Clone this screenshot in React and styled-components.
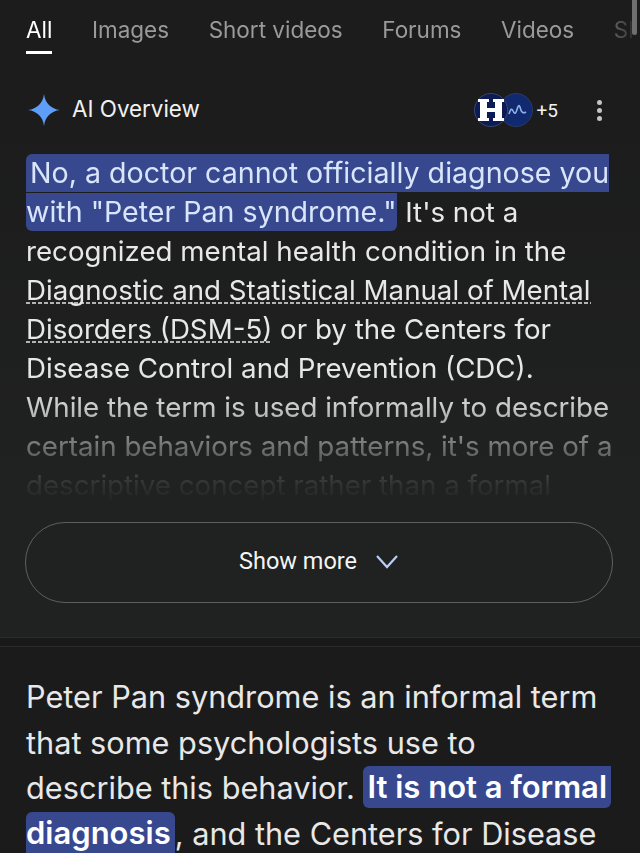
import React from 'react'
import styled, { createGlobalStyle } from "styled-components";

const Global = createGlobalStyle`
  html, body { margin: 0; padding: 0; background: #1b1b1b; }
  body { width: 640px; height: 853px; overflow: hidden; font-family: "Inter", "Liberation Sans", sans-serif; }
`;

const Page = styled.div`
  position: relative;
  width: 640px;
  height: 853px;
  overflow: hidden;
  background: #1b1b1b;
`;

const Overview = styled.section`
  padding-bottom: 34px;
  background: linear-gradient(to bottom, #1c1c1c 0, #1c1c1c 120px, #202121 480px);
`;

const ScrollThumb = styled.div`
  position: absolute;
  top: 0;
  right: 3px;
  width: 5px;
  height: 35px;
  background: #6f6f6f;
  border-radius: 0 0 3px 3px;
`;

const Tabs = styled.nav`
  display: flex;
  gap: 39.5px;
  height: 54px;
  padding-left: 26px;
  overflow: hidden;
  white-space: nowrap;
  font-size: 22.5px;
  mask-image: linear-gradient(to right, #000 585px, rgba(0,0,0,.35) 625px, transparent 636px);
`;

const Tab = styled.div`
  height: 54px;
  box-sizing: border-box;
  padding-top: 15px;
  line-height: 30px;
  color: ${p => (p.$active ? "#fff" : "#9a9a9a")};
  border-bottom: 3px solid ${p => (p.$active ? "#fff" : "transparent")};
`;

const OverviewHead = styled.div`
  display: flex;
  align-items: center;
  height: 100px;
  box-sizing: border-box;
  padding: 12px 26px 0 28px;
`;

const OverviewTitle = styled.span`
  margin-left: 12px;
  padding-bottom: 4px;
  font-size: 22.4px;
  color: #f1f1f1;
  flex: 1;
`;

const Avatars = styled.div`
  display: flex;
  align-items: center;
`;

const Avatar = styled.svg`
  position: relative;
  z-index: ${p => (p.$overlap ? 0 : 1)};
  width: 34px;
  height: 34px;
  margin-left: ${p => (p.$overlap ? "-9px" : "0")};
`;

const MoreCount = styled.span`
  margin-left: 4px;
  font-family: "Roboto", sans-serif;
  font-size: 19px;
  color: #f1f1f1;
`;

const Dots = styled.div`
  display: flex;
  flex-direction: column;
  gap: 3px;
  margin-left: 39px;
  margin-right: 12px;
`;

const Dot = styled.i`
  display: block;
  width: 5px;
  height: 5px;
  border-radius: 50%;
  background: #c4c4c4;
`;

const Answer = styled.div`
  height: 368px;
  padding-left: 26px;
  font-size: 27.7px;
  line-height: 39px;
  color: #e8e8e8;
  white-space: nowrap;
  mask-image: linear-gradient(to bottom, #000 0, #000 215px, rgba(0,0,0,.85) 253px, rgba(0,0,0,.42) 292px, rgba(0,0,0,.08) 331px, transparent 352px);
`;

const Line = styled.div`
  display: block;
`;

const Mark = styled.span`
  display: inline-block;
  line-height: 37px;
  height: 38px;
  vertical-align: top;
  font-size: 28.6px;
  padding: 0 ${p => p.$pad || 0}px 0 ${p => p.$padLeft || 0}px;
  background: #38488f;
  color: #d8e5fb;
  border-radius: ${p => p.$radius || "0"};
`;

const Dashed = styled.span`
  background: repeating-linear-gradient(to right, #b4b4b4 0 4px, transparent 4px 6px) no-repeat 0 calc(100% - 3px) / 100% 2px;
`;

const ShowMore = styled.button`
  display: flex;
  align-items: center;
  justify-content: center;
  gap: 18px;
  box-sizing: border-box;
  width: 588px;
  height: 81px;
  margin-left: 25px;
  padding-bottom: 4px;
  background: transparent;
  border: 1px solid #5d5f60;
  border-radius: 40px;
  font-family: "Roboto", sans-serif;
  font-size: 23.500px;
  color: #f4f4f4;
`;

const Divider = styled.div`
  height: 8px;
  background: #191919;
  border-top: 1px solid #2b2b2b;
  border-bottom: 1px solid #2b2b2b;
`;

const Detail = styled.div`
  padding: 27px 0 0 26px;
  font-size: 30.700px;
  line-height: 45.5px;
  color: #e8e8e8;
  white-space: nowrap;
`;

const Strong = styled.span`
  display: inline-block;
  height: 42px;
  line-height: 42px;
  vertical-align: top;
  margin-top: 1px;
  padding: 0 ${p => p.$pad || 0}px 0 ${p => p.$padLeft || 0}px;
  background: #38488f;
  color: #fff;
  font-size: 31px;
  font-weight: 600;
  border-radius: ${p => p.$radius || "0"};
`;

export default function App() {
  return (
    <Page>
      <Global />
      <ScrollThumb />
      <Overview>
        <Tabs>
          <Tab $active>All</Tab>
          <Tab>Images</Tab>
          <Tab>Short videos</Tab>
          <Tab>Forums</Tab>
          <Tab>Videos</Tab>
          <Tab>Shopping</Tab>
        </Tabs>
        <OverviewHead>
          <svg width="32" height="32" viewBox="0 0 32 32">
            <path d="M16 0C17 9 23 15 32 16C23 17 17 23 16 32C15 23 9 17 0 16C9 15 15 9 16 0Z" fill="#5f9ef8" />
          </svg>
          <OverviewTitle>AI Overview</OverviewTitle>
          <Avatars>
            <Avatar viewBox="0 0 34 34">
              <circle cx="17" cy="17" r="16.5" fill="#0c1a55" stroke="#3a4668" />
              <path d="M4 6H15V9H13V15H21V9H19V6H30V9H28V25H30V28H19V25H21V19H13V25H15V28H4V25H6V9H4Z" fill="#fff" />
            </Avatar>
            <Avatar $overlap viewBox="0 0 34 34">
              <circle cx="17" cy="17" r="16.5" fill="#11296f" stroke="#2b3a66" />
              <path d="M10 21C11 18 12 15 13.500 17C15 20 16 22 17.500 18C19 13 20 11 21 14C22 19 24 21 27 19" fill="none" stroke="#8fb0e8" strokeWidth="1.6" />
            </Avatar>
            <MoreCount>+5</MoreCount>
          </Avatars>
          <Dots><Dot /><Dot /><Dot /></Dots>
        </OverviewHead>
        <Answer>
          <Line><Mark $padLeft={4} $radius="6px 0 0 0">No, a doctor cannot officially diagnose you</Mark></Line>
          <Line><Mark $pad={1} $radius="0 0 6px 6px">with "Peter Pan syndrome."</Mark> It's not a</Line>
          <Line>recognized mental health condition in the</Line>
          <Line><Dashed>Diagnostic and Statistical Manual of Mental</Dashed></Line>
          <Line><Dashed>Disorders (DSM-5)</Dashed> or by the Centers for</Line>
          <Line>Disease Control and Prevention (CDC).</Line>
          <Line>While the term is used informally to describe</Line>
          <Line>certain behaviors and patterns, it's more of a</Line>
          <Line>descriptive concept rather than a formal</Line>
        </Answer>
        <ShowMore>
          Show more
          <svg width="24" height="24" viewBox="0 0 24 24" fill="none" stroke="#b9cdf5" strokeWidth="2.2">
            <path d="M2 7L12 18L22 7" />
          </svg>
        </ShowMore>
      </Overview>
      <Divider />
      <Detail>
        <Line>Peter Pan syndrome is an informal term</Line>
        <Line>that some psychologists use to</Line>
        <Line>describe this behavior. <Strong $padLeft={4} $pad={4} $radius="6px 0 6px 6px">It is not a formal</Strong></Line>
        <Line><Strong $pad={4} $radius="6px 6px 0 0">diagnosis</Strong>, and the Centers for Disease</Line>
      </Detail>
    </Page>
  )
}
